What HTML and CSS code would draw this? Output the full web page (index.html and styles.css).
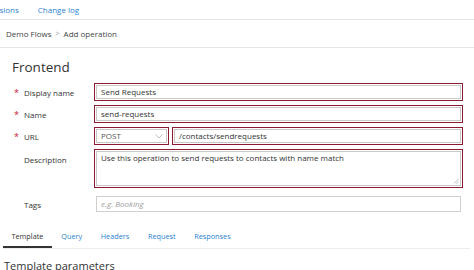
FILE: index.html
```html
<!DOCTYPE html>
<html>
<head>
<meta charset="utf-8">
<link rel="stylesheet" href="styles.css">
</head>
<body>
<nav class="topnav">
  <a class="toplink">Revisions</a>
  <a class="toplink">Change log</a>
</nav>
<div class="crumbs">
  <span>Demo Flows</span><span class="sep">&gt;</span><span>Add operation</span>
</div>
<main class="main">
  <h1 class="title">Frontend</h1>
  <div class="form">
    <div class="label req">Display name</div>
    <div class="field"><div class="input err">Send Requests</div></div>

    <div class="label req">Name</div>
    <div class="field"><div class="input err">send-requests</div></div>

    <div class="label req">URL</div>
    <div class="field url">
      <div class="input err select">POST
        <svg class="chev" width="8" height="5" viewBox="0 0 8 5"><path d="M0.5 0.5 L4 4 L7.5 0.5" fill="none" stroke="#b8b8b8" stroke-width="0.9"/></svg>
      </div>
      <div class="input err path">/contacts/sendrequests</div>
    </div>

    <div class="label top">Description</div>
    <div class="field"><div class="input err area">Use this operation to send requests to contacts with name match
      <svg class="grip" width="6" height="6" viewBox="0 0 6 6"><path d="M5.5 1 L1 5.5 M5.5 3.5 L3.5 5.5" stroke="#aaa" stroke-width="0.8"/></svg>
    </div></div>

    <div class="label tagl">Tags</div>
    <div class="field tagf"><div class="input ph">e.g. Booking</div></div>
  </div>
</main>
<div class="tabs">
  <span class="tab active">Template</span>
  <span class="tab">Query</span>
  <span class="tab">Headers</span>
  <span class="tab">Request</span>
  <span class="tab">Responses</span>
</div>
<h2 class="sub">Template parameters</h2>
</body>
</html>
```
FILE: styles.css
```css
html, body { margin: 0; padding: 0; background: #fff; }
body {
  font-family: "Open Sans", "Noto Sans", sans-serif;
  color: #333;
  width: 474px;
  height: 270px;
  overflow: hidden;
}
.topnav {
  height: 19px;
  border-bottom: 1px solid #e3e3e3;
  display: flex;
  align-items: center;
  gap: 19px;
  font-size: 8px;
  margin-left: -16px;
  padding-bottom: 0;
}
.toplink { color: #2b7fd0; }
.crumbs {
  height: 27px;
  padding-left: 6px;
  display: flex;
  align-items: center;
  font-size: 8px;
  color: #444;
  border-bottom: 1px solid #e6e6e6;
}
.sep { color: #999; margin: 0 4px; font-size: 7px; }
.main {
  padding: 0 11px 0 14px;
}
.title {
  margin: 0 0 0 -2px;
  font-weight: 400;
  font-size: 13.5px;
  line-height: 20px;
  padding-top: 9px;
  color: #333;
}
.form {
  margin-top: 8px;
  display: grid;
  grid-template-columns: 82px 365px;
  row-gap: 8px;
  font-size: 8px;
}
.label {
  display: flex;
  align-items: center;
  padding-left: 10px;
  position: relative;
  color: #333;
}
.label.req::before {
  content: "*";
  color: #c4202b;
  position: absolute;
  left: 0;
  top: 50%;
  transform: translateY(-45%);
  font-size: 9px;
}
.label.top { align-items: flex-start; padding-top: 3px; }
.field { display: flex; }
.url { gap: 7px; }
.input {
  flex: 1;
  height: 12px;
  border: 1px solid #c8c8c8;
  padding: 0 4px;
  line-height: 12px;
  color: #333;
  position: relative;
  white-space: nowrap;
}
.input.err { outline: 1px solid #8b1a33; outline-offset: 1px; }
.select { flex: 0 0 61px; color: #555; }
.chev { position: absolute; right: 3px; top: 4px; }
.area { height: 33px; }
.grip { position: absolute; right: 1px; bottom: 1px; }
.form .tagl, .form .tagf { margin-top: 2px; }
.ph { font-style: italic; color: #a0a0a0; height: 14px; line-height: 14px; border-color: #d0d0d0; }
.tabs {
  margin: 12px 4px 0 3px;
  height: 24px;
  display: flex;
  align-items: center;
  border-bottom: 1px solid #ececec;
  font-size: 7.3px;
  color: #2b7fd0;
}
.tab { padding: 0 9.3px; height: 24px; line-height: 24px; }
.tab.active { color: #333; box-shadow: inset 0 -2px 0 #333; padding: 0 8.5px; }
.sub {
  margin: 9px 0 0 4px;
  font-weight: 400;
  font-size: 11px;
  line-height: 15px;
  color: #333;
}
```
